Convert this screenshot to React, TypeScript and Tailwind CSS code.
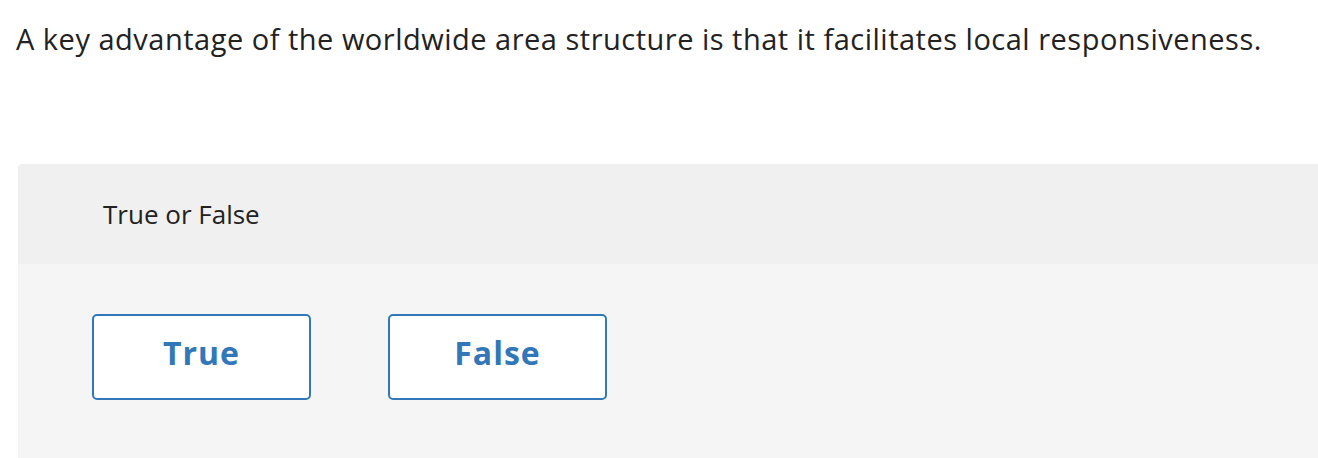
import { useState } from 'react'

const choices = ['True', 'False']

export default function App() {
  const [picked, setPicked] = useState<string | null>(null)

  return (
    <div className="min-h-screen bg-white font-['Open_Sans',sans-serif] text-[#222]">
      <p className="pl-[16px] pt-[21px] text-[29px] leading-[36px] tracking-[0.5px]">
        A key advantage of the worldwide area structure is that it facilitates local responsiveness.
      </p>

      <div className="ml-[18px] mt-[107px] rounded-tl-[4px] overflow-hidden">
        <div className="h-[100px] bg-[#f0f0f0] pl-[85px] flex items-center">
          <span className="text-[26px]">True or False</span>
        </div>
        <div className="bg-[#f5f5f5] h-[194px] pl-[74px] pt-[50px] flex gap-[77px] items-start">
          {choices.map((c) => (
            <button
              key={c}
              onClick={() => setPicked(c)}
              className={`w-[219px] h-[86px] pb-[9px] rounded-[5px] border-2 border-[#3278b8] bg-white text-[32px] font-bold tracking-[1px] text-[#3278b8] ${picked === c ? 'ring-2 ring-[#3278b8]/30' : ''}`}
            >
              {c}
            </button>
          ))}
        </div>
      </div>
    </div>
  )
}
